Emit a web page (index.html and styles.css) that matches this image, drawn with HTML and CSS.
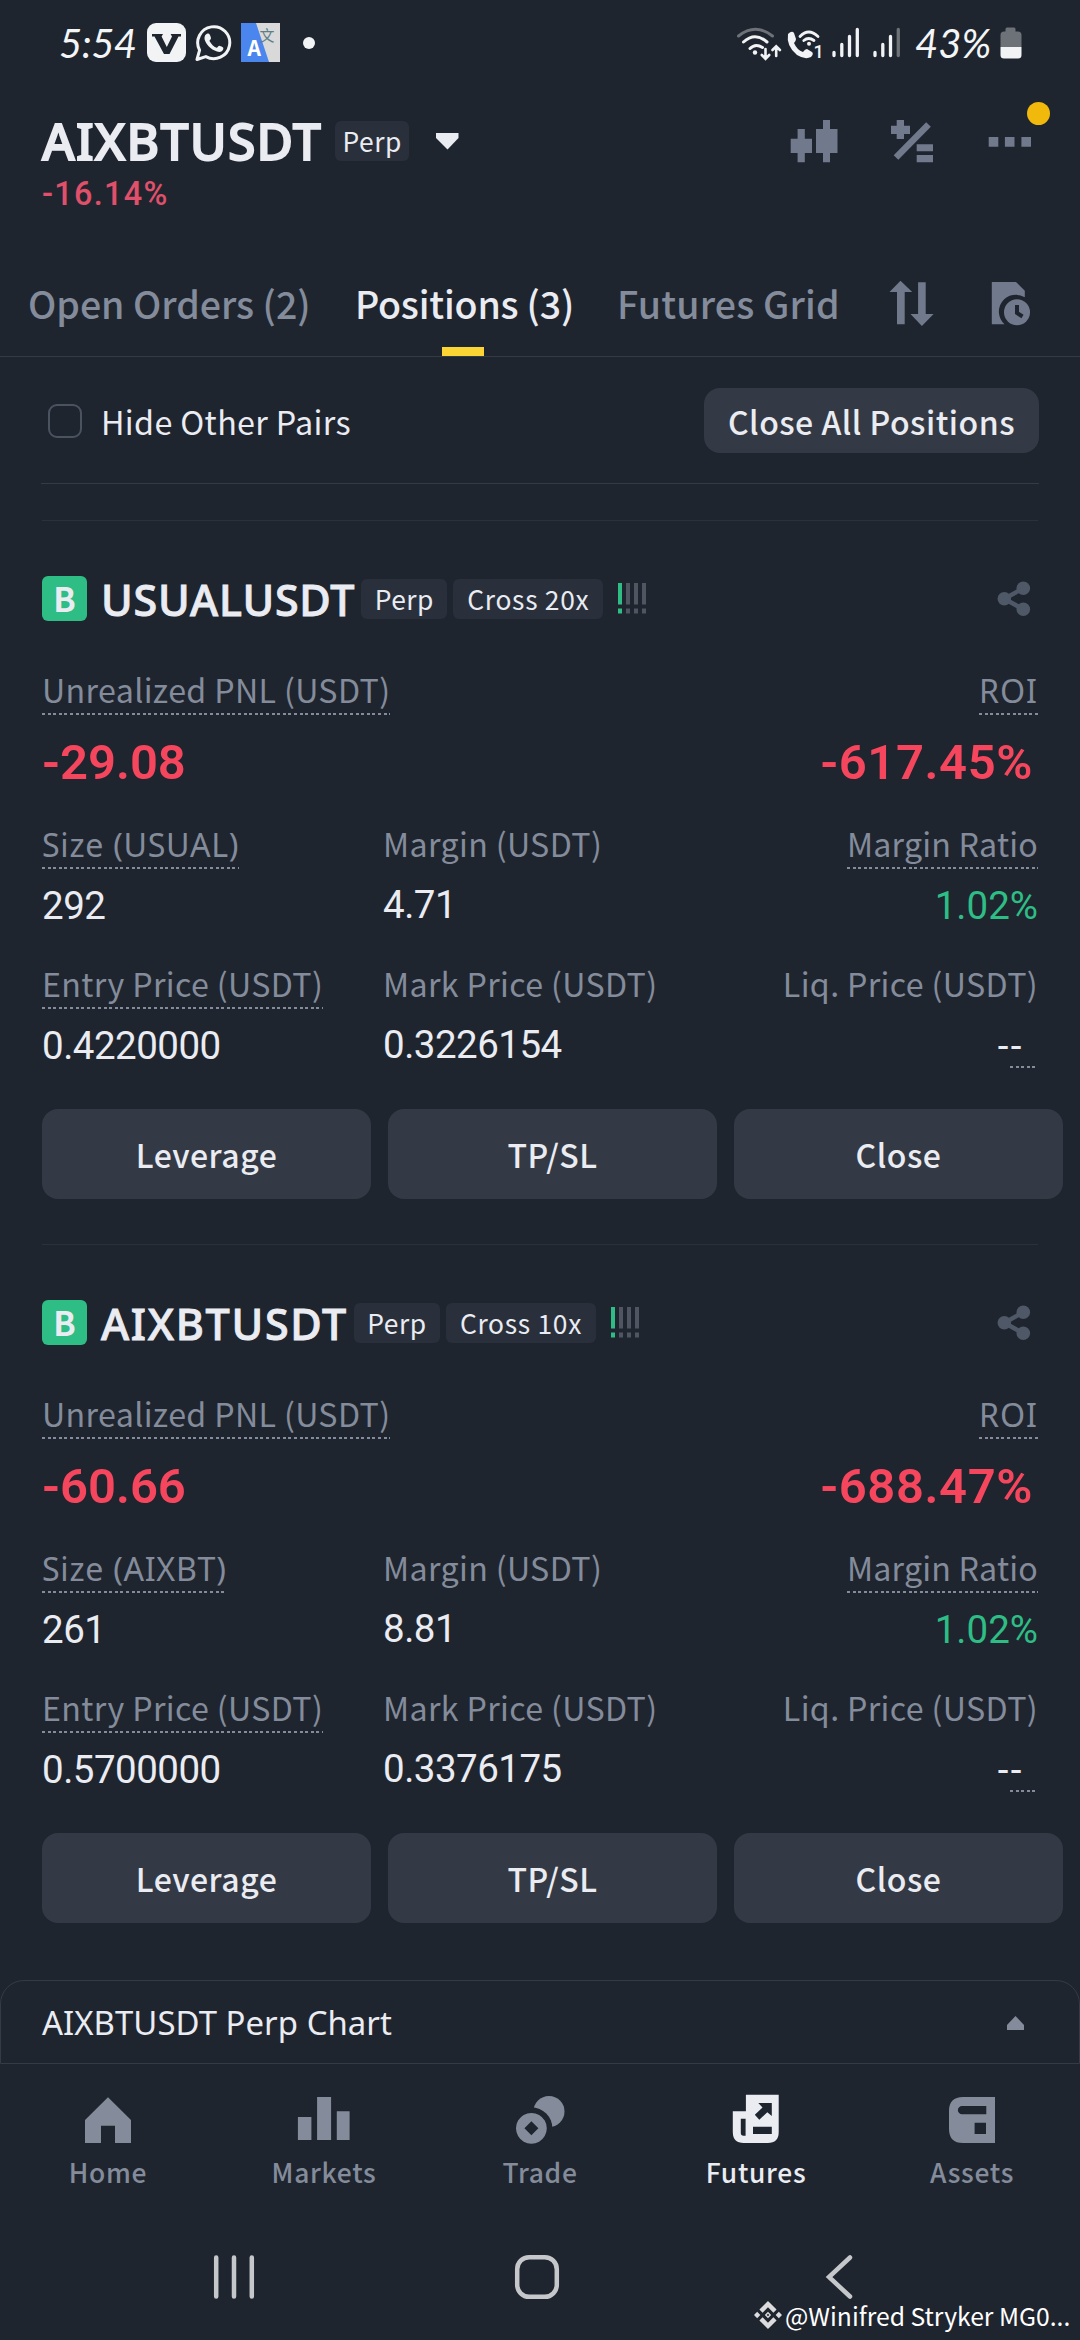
FILE: index.html
```html
<!DOCTYPE html>
<html lang="en">
<head>
<meta charset="utf-8">
<title>Futures positions</title>
<link rel="stylesheet" href="styles.css">
</head>
<body>
<div class="screen">

  <div class="status">
    <span class="status-time">5:54</span>
    <svg class="ic-v" width="39" height="39" viewBox="0 0 39 39"><rect width="39" height="39" rx="9" fill="#f1f3f4"/><path d="M5 11H16L14.6 13.5L19.8 24L25 13.5L23.6 11H34V13.5H31.5L22.5 31H17L7.5 13.5H5Z" fill="#1f252f"/></svg>
    <svg class="ic-wa" width="37" height="39" viewBox="0 0 37 39"><path d="M2 36.5L4.6 27.2A16 16 0 1 1 10.8 33.6Z" fill="none" stroke="#f1f3f4" stroke-width="3" stroke-linejoin="round"/><path d="M12.5 10.5C14.5 10 15 11.5 16 15C16 16.5 14.5 17 14.5 18C16.5 21.5 18.5 23.5 21.5 24.8C22.8 24.8 23 22.8 24.5 22.8C28 24 28.5 24.5 28.3 26C27.5 29 24.5 29.3 22 28.5C15.5 26.5 11 21.5 9.5 16C9.3 13 10.5 11 12.5 10.5Z" fill="#f1f3f4"/></svg>
    <svg class="ic-tr" width="39" height="39" viewBox="0 0 39 39"><rect width="39" height="39" fill="#d9d9d9"/><path d="M0 0H15L28 39H0Z" fill="#4a86ee"/><text x="6.5" y="33" class="tr-a">A</text><text x="18.5" y="18" class="tr-z">文</text></svg>
    <span class="status-dot"></span>
    <div class="status-right">
      <svg width="48" height="40" viewBox="0 0 48 40" fill="none" stroke="#f1f3f4" stroke-width="3" stroke-linecap="round"><path d="M3.5 13Q20.5 -.5 37.5 13" stroke="#6d7178"/><path d="M8.5 19Q20 8.500 32 19M15 25.500Q20.500 20 27.500 24.500"/><circle cx="20" cy="29.500" r="2.200" fill="#f1f3f4" stroke="none"/><path d="M30.500 26V35M26.800 32L30.500 35.800L34.200 32M41.200 33V24M37.500 27L41.200 23.300L44.900 27" stroke-width="2.600"/></svg>
      <svg class="ic-call" width="42" height="40" viewBox="0 0 42 40"><path d="M4 11Q8 7 10 10L12 16Q12 18 10 20Q13 27 19 29Q21 26 23 26L28 29Q30 31 27 34Q21 37 13 32Q2 23 4 11Z" fill="#f1f3f4"/><g fill="none" stroke="#f1f3f4" stroke-width="2.800" stroke-linecap="round"><path d="M16 13.500Q24.500 4.500 34 13.500M19.800 17.500Q24.500 13.500 30 17.500"/></g><circle cx="25" cy="20.700" r="2" fill="#f1f3f4"/><text x="29.500" y="35" class="call-n">1</text></svg>
      <svg class="ic-sig" width="29" height="32" viewBox="0 0 29 32" stroke="#f1f3f4" stroke-width="3.300" stroke-linecap="round"><path d="M2 25.500V28.500M9.800 17.500V28.500M17.500 9.500V28.500M25.300 2.500V28.500"/></svg>
      <svg class="ic-sig2" width="29" height="32" viewBox="0 0 29 32" stroke="#f1f3f4" stroke-width="3.300" stroke-linecap="round"><path d="M2 25.500V28.500M9.800 17.500V28.500M17.500 9.500V28.500"/><path d="M25.300 2.500V28.500" stroke="#6d7178"/></svg>
      <span class="status-pct">43%</span>
      <svg class="ic-bat" width="22" height="32" viewBox="0 0 22 32"><path d="M5.500 4.500V2Q5.500 .5 7 .5H14Q15.500 .5 15.500 2V4.500H18Q21.500 4.500 21.500 8V20H.5V8Q.5 4.500 4 4.500Z" fill="#6d7178"/><path d="M.5 20H21.500V28Q21.500 31.500 18 31.500H4Q.5 31.500 .5 28Z" fill="#f1f3f4"/></svg>
    </div>
  </div>

  <header class="head">
    <div class="head-row">
      <h1 class="symbol">AIXBTUSDT</h1>
      <span class="tag tag-head">Perp</span>
      <svg class="caret" width="23" height="17" viewBox="0 0 23 17"><path d="M0 0H22.500V5L11.500 16.500L0 5Z" fill="#eaecf2"/></svg>
      <div class="head-icons">
        <svg width="60" height="60" viewBox="0 0 60 60" fill="#717a8c"><path d="M13.600 18H20.800V27.700H28V42H20.800V51.300H13.600V42H6.700V27.700H13.600ZM39 9H46V18H53.500V42H46V51.300H39V42H32V18H39Z"/></svg>
        <svg width="60" height="60" viewBox="0 0 60 60" fill="#717a8c"><path d="M14.700 9H22V14.700H28V23H22V28H14.700V23H9V14.700H14.700ZM34.700 33.300H51V40.300H34.700ZM34.700 44H51V51.300H34.700Z"/><path d="M14 46.500L46.500 13.500" stroke="#717a8c" stroke-width="6.500"/></svg>
        <div class="more">
          <svg width="60" height="60" viewBox="0 0 60 60" fill="#717a8c"><path d="M8.700 26H18.300V35.700H8.700ZM24.900 26H34.500V35.700H24.900ZM41.400 26H51V35.700H41.400Z"/></svg>
          <span class="notice"></span>
        </div>
      </div>
    </div>
    <div class="change">-16.14%</div>
  </header>

  <nav class="tabs">
    <span class="tab">Open Orders (2)</span>
    <span class="tab tab-on">Positions (3)</span>
    <span class="tab tab-grid">Futures Grid</span>
    <svg width="60" height="60" viewBox="0 0 60 60" fill="#717a8c"><path d="M18.500 7.700L30.200 19H22.700V51.300H15V19H7.500ZM36.100 9.300H43.700V41H51.600L39.900 53L28.500 41H36.100Z"/></svg>
    <svg width="60" height="60" viewBox="0 0 60 60" fill="#717a8c"><path d="M11.800 9H36L44.800 17.700V24.200A17 17 0 0 0 24.500 51.300H11.800Z"/><circle cx="37" cy="39.300" r="13"/><path d="M37 32V40L42.500 43.500" fill="none" stroke="#1f252f" stroke-width="4"/></svg>
  </nav>

  <div class="filter">
    <span class="check"></span>
    <span class="filter-label">Hide Other Pairs</span>
    <button class="close-all">Close All Positions</button>
  </div>

  <main class="list">
    <article class="card">
      <div class="card-head">
        <span class="side">B</span>
        <h2 class="pair">USUALUSDT</h2>
        <span class="tag tag-perp">Perp</span>
        <span class="tag tag-cross">Cross 20x</span>
        <svg class="risk" width="28" height="31" viewBox="0 0 28 31"><path d="M0 0H4V21.500H0ZM0 25.500H4V30.500H0Z" fill="#2ebd85"/><path d="M8 0H12V21.500H8ZM8 25.500H12V30.500H8ZM16 0H20V21.500H16ZM16 25.500H20V30.500H16ZM24 0H28V21.500H24ZM24 25.500H28V30.500H24Z" fill="#4f5661"/></svg>
        <svg class="share" width="36" height="36" viewBox="0 0 36 36" fill="#4f5867"><path d="M27.300 7.300L8.300 17.700L27.300 28.300" fill="none" stroke="#4f5867" stroke-width="4.500"/><circle cx="8.300" cy="17.700" r="6.800"/><circle cx="27.300" cy="7.300" r="6.800"/><circle cx="27.300" cy="28.300" r="6.800"/></svg>
      </div>
      <div class="pnl">
        <div><span class="label dots">Unrealized PNL (USDT)</span><div class="big">-29.08</div></div>
        <div class="end"><span class="label dots roi">ROI</span><div class="big big-roi">-617.45%</div></div>
      </div>
      <div class="stats">
        <div><span class="label dots size">Size (USUAL)</span><div class="val">292</div></div>
        <div><span class="label">Margin (USDT)</span><div class="val mid">4.71</div></div>
        <div class="end"><span class="label dots ratio">Margin Ratio</span><div class="val up">1.02%</div></div>
        <div><span class="label dots">Entry Price (USDT)</span><div class="val">0.4220000</div></div>
        <div><span class="label">Mark Price (USDT)</span><div class="val mid">0.3226154</div></div>
        <div class="end"><span class="label">Liq. Price (USDT)</span><div class="val none">--</div></div>
      </div>
      <div class="actions"><button>Leverage</button><button>TP/SL</button><button>Close</button></div>
    </article>

    <article class="card">
      <div class="card-head">
        <span class="side">B</span>
        <h2 class="pair pair-wide">AIXBTUSDT</h2>
        <span class="tag tag-perp">Perp</span>
        <span class="tag tag-cross">Cross 10x</span>
        <svg class="risk" width="28" height="31" viewBox="0 0 28 31"><path d="M0 0H4V21.500H0ZM0 25.500H4V30.500H0Z" fill="#2ebd85"/><path d="M8 0H12V21.500H8ZM8 25.500H12V30.500H8ZM16 0H20V21.500H16ZM16 25.500H20V30.500H16ZM24 0H28V21.500H24ZM24 25.500H28V30.500H24Z" fill="#4f5661"/></svg>
        <svg class="share" width="36" height="36" viewBox="0 0 36 36" fill="#4f5867"><path d="M27.300 7.300L8.300 17.700L27.300 28.300" fill="none" stroke="#4f5867" stroke-width="4.500"/><circle cx="8.300" cy="17.700" r="6.800"/><circle cx="27.300" cy="7.300" r="6.800"/><circle cx="27.300" cy="28.300" r="6.800"/></svg>
      </div>
      <div class="pnl">
        <div><span class="label dots">Unrealized PNL (USDT)</span><div class="big">-60.66</div></div>
        <div class="end"><span class="label dots roi">ROI</span><div class="big big-roi">-688.47%</div></div>
      </div>
      <div class="stats">
        <div><span class="label dots size">Size (AIXBT)</span><div class="val">261</div></div>
        <div><span class="label">Margin (USDT)</span><div class="val mid">8.81</div></div>
        <div class="end"><span class="label dots ratio">Margin Ratio</span><div class="val up">1.02%</div></div>
        <div><span class="label dots">Entry Price (USDT)</span><div class="val">0.5700000</div></div>
        <div><span class="label">Mark Price (USDT)</span><div class="val mid">0.3376175</div></div>
        <div class="end"><span class="label">Liq. Price (USDT)</span><div class="val none">--</div></div>
      </div>
      <div class="actions"><button>Leverage</button><button>TP/SL</button><button>Close</button></div>
    </article>
  </main>

  <div class="chart-bar">
    <span>AIXBTUSDT Perp Chart</span>
    <svg width="17" height="14" viewBox="0 0 17 14"><path d="M8.500 0L17 9V14H0V9Z" fill="#848c9b"/></svg>
  </div>

  <nav class="bottom">
    <div class="item"><svg width="56" height="56" viewBox="0 0 56 56" fill="#848c9b"><path d="M28 5.300L51 28V51H35V33.700H21V51H5V28Z"/></svg><span>Home</span></div>
    <div class="item"><svg width="56" height="56" viewBox="0 0 56 56" fill="#848c9b"><path d="M1.900 25H15.400V48H1.900ZM21.100 5H35.100V48H21.100ZM40.800 19.300H53.600V48H40.800Z"/></svg><span>Markets</span></div>
    <div class="item"><svg width="56" height="56" viewBox="0 0 56 56" fill="#848c9b"><mask id="ring"><rect width="56" height="56" fill="#fff"/><circle cx="19.400" cy="36.300" r="21" fill="#000"/></mask><circle cx="37" cy="19.500" r="15.500" mask="url(#ring)"/><path fill-rule="evenodd" d="M19.400 20.900A15.400 15.400 0 1 1 19.390 20.900ZM19.400 29.300L12.400 36.300L19.400 43.300L26.400 36.300Z"/></svg><span>Trade</span></div>
    <div class="item item-on"><svg width="56" height="56" viewBox="0 0 56 56" fill="#eaecf2"><path fill-rule="evenodd" d="M17.900 2.700H50.700V40Q50.700 51 39.700 51H15.800Q4.800 51 4.800 40V19.300H17.900ZM12.800 26.700V41Q12.800 43.700 15.500 43.700H17.600V26.700ZM25 34.700V42H43.800V34.700ZM30.300 11H43.800V24L39.300 20.300L31.300 27.700L26.800 22.700L34.500 15.500Z"/></svg><span>Futures</span></div>
    <div class="item"><svg width="56" height="56" viewBox="0 0 56 56" fill="#848c9b"><path fill-rule="evenodd" d="M19 5H51V51H19Q5 51 5 37V19Q5 5 19 5ZM18 14A4.150 4.150 0 0 0 18 22.300H42.300V14ZM30.600 30.700V42H42V30.700Z"/></svg><span>Assets</span></div>
  </nav>

  <div class="sys">
    <svg width="56" height="56" viewBox="0 0 56 56" stroke="#c6c7cb" stroke-width="4.500" stroke-linecap="round"><path d="M10.200 8.500V47.500M28 8.500V47.500M45.800 8.500V47.500"/></svg>
    <svg width="56" height="56" viewBox="0 0 56 56" fill="none" stroke="#c6c7cb" stroke-width="4.500"><rect x="8.200" y="8.200" width="39.600" height="39.600" rx="12"/></svg>
    <svg width="56" height="56" viewBox="0 0 56 56" fill="none" stroke="#c6c7cb" stroke-width="4.500" stroke-linecap="round"><path d="M39 8.500L18 28L39 47.500"/></svg>
  </div>

  <div class="credit">
    <svg width="28" height="28" viewBox="0 0 24 24" fill="#dcdcdc"><path d="M16.624 13.920l2.718 2.716-7.353 7.353-7.353-7.352 2.717-2.717 4.636 4.660 4.635-4.660zm4.637-4.636L24 12l-2.715 2.716L18.568 12l2.693-2.716zm-9.272 0l2.716 2.692-2.717 2.717L9.272 12l2.716-2.715zm-9.273 0L5.409 12l-2.692 2.692L0 12l2.716-2.716zM11.989.011l7.353 7.329-2.718 2.716-4.635-4.636-4.636 4.660-2.717-2.716z"/><path d="M12 10.900L13.100 12L12 13.100L10.900 12Z" fill="#1f252f"/></svg>
    <span>@Winifred Stryker MG0...</span>
  </div>
</div>
</body>
</html>
```
FILE: styles.css
```css
* { box-sizing: border-box; margin: 0; padding: 0; }

body {
  background: #1f252f;
  color: #eaecf2;
  font-family: "Noto Sans CJK SC", "Noto Sans", sans-serif;
}

svg { display: block; flex: none; }

.screen {
  position: relative;
  width: 1080px;
  height: 2340px;
  overflow: hidden;
  background: #1f252f;
}

/* status bar */
.status {
  display: flex;
  align-items: center;
  height: 85px;
  padding: 0 58px 0 59px;
}
.status-time, .status-pct {
  font: italic 400 40px/44px Lato, sans-serif;
  color: #f4f5f6;
  white-space: nowrap;
}
.status-time { width: 88px; letter-spacing: -.5px; }
.status-pct { width: 85px; margin-left: 13px; letter-spacing: 0; }
.ic-wa { margin-left: 9px; }
.ic-tr { margin-left: 9px; }
.tr-a { font: 700 21px "Noto Sans CJK SC", sans-serif; fill: #fff; }
.tr-z { font: 400 15px "Noto Sans CJK SC", sans-serif; fill: #5f7f88; }
.status-dot {
  width: 12px;
  height: 12px;
  margin-left: 23px;
  border-radius: 50%;
  background: #f1f3f4;
}
.status-right { display: flex; align-items: center; margin-left: auto; }
.ic-call { margin-left: 1px; }
.call-n { font: 500 18px Roboto, sans-serif; fill: #f1f3f4; }
.ic-sig { margin-left: 6px; }
.ic-sig2 { margin-left: 12px; }

/* instrument header */
.head { padding: 26px 40px 0 42px; }
.head-row { display: flex; align-items: center; height: 60px; }
.symbol {
  font: 500 50px/60px "Noto Sans", sans-serif;
  letter-spacing: 1.2px;
  -webkit-text-stroke: 1.8px #eaecf2;
}
.tag {
  display: flex;
  align-items: center;
  justify-content: center;
  height: 40px;
  border-radius: 6px;
  background: #29303c;
  font-size: 26.4px;
  letter-spacing: .5px;
  line-height: 40px;
  white-space: nowrap;
}
.tag-head { width: 74px; margin-left: 13px; }
.caret { margin-left: 27px; }
.head-icons { display: flex; gap: 38px; margin-left: auto; }
.more { position: relative; }
.notice {
  position: absolute;
  left: 47px;
  top: -9px;
  width: 23px;
  height: 23px;
  border-radius: 50%;
  background: #f0b90b;
}
.change {
  margin-top: 5px;
  font: 500 32.4px/36px Roboto, sans-serif;
  letter-spacing: 1.3px;
  color: #e0506a;
}

/* tabs */
.tabs {
  display: grid;
  grid-template-columns: 327px 262px 265px 60px 60px;
  column-gap: 0;
  align-items: center;
  height: 107px;
  margin-top: 38px;
  padding-left: 28px;
  border-bottom: 1px solid #343b46;
}
.tabs svg + svg { margin-left: 38px; }
.tab {
  position: relative;
  font-size: 37.5px;
  font-weight: 500;
  line-height: 106px;
  color: #848c9b;
  white-space: nowrap;
}
.tab-on { color: #eaecf2; letter-spacing: -.2px; }
.tab-grid { letter-spacing: .2px; }
.tab-on::after {
  content: "";
  position: absolute;
  left: 87px;
  bottom: 0;
  width: 42px;
  height: 9px;
  background: #fcd535;
}

/* filter row */
.filter {
  display: flex;
  align-items: center;
  height: 127px;
  margin: 0 41px;
  padding-top: 1px;
  border-bottom: 1px solid #343b46;
}
.check {
  width: 34px;
  height: 34px;
  margin-left: 7px;
  border: 2.5px solid #4b5260;
  border-radius: 9px;
}
.filter-label { margin-left: 19px; font-size: 32.3px; letter-spacing: .35px; }
button {
  border: 0;
  border-radius: 16px;
  background: #343a45;
  color: #eaecf2;
  font: 500 32px/46px "Noto Sans CJK SC", sans-serif;
  letter-spacing: .5px;
}
.close-all { width: 335px; height: 65px; margin-left: auto; }

/* position cards */
.list { padding-top: 36px; }
.card { height: 724px; padding: 0 17px 0 42px; }
.card::before {
  content: "";
  display: block;
  height: 1px;
  margin-right: 25px;
  background: #2a313c;
}
.card-head {
  display: flex;
  align-items: center;
  height: 55px;
  margin: 50px 25px 0 0;
}
.side {
  width: 45px;
  height: 45px;
  border-radius: 6px;
  background: #2ebd85;
  font: 700 33px/45px "Noto Sans CJK SC", sans-serif;
  text-align: center;
}
.pair {
  margin-left: 14px;
  padding-top: 2px;
  font: 500 43px/55px "Noto Sans", sans-serif;
  letter-spacing: .8px;
  -webkit-text-stroke: .9px #eaecf2;
}
.pair-wide { letter-spacing: 1.7px; }
.tag-perp { width: 86px; margin-left: 6px; }
.tag-cross { width: 150px; margin-left: 6px; letter-spacing: .7px; }
.risk { margin-left: 15px; }
.share { margin: 0 6px 0 auto; }

.label {
  display: inline-block;
  height: 49px;
  font-size: 32.2px;
  line-height: 47px;
  letter-spacing: .35px;
  color: #848c9b;
  white-space: nowrap;
  vertical-align: top;
}
.dots {
  background: repeating-linear-gradient(90deg, #848c9b 0 3px, transparent 3px 5.6px) 0 100% / 100% 2px no-repeat;
}
.roi, .size { font-family: "Noto Sans", sans-serif; line-height: 50px; }
.roi { letter-spacing: 1px; }
.size { letter-spacing: .7px; }
.ratio { letter-spacing: .2px; }
.end { text-align: right; }

.pnl {
  display: flex;
  justify-content: space-between;
  margin: 40px 25px 0 0;
}
.big {
  margin-top: 18px;
  font: 600 49px/60px Roboto, sans-serif;
  letter-spacing: 0;
  color: #f6465d;
}
.big-roi { padding-right: 5px; letter-spacing: .6px; }
.stats {
  display: grid;
  grid-template-columns: 341px 1fr auto;
  row-gap: 32px;
  margin: 27px 25px 0 0;
}
.val {
  margin-top: 15px;
  font: 400 38.5px/44px Roboto, sans-serif;
  letter-spacing: -.5px;
}
.mid { margin-top: 14px; }
.up { color: #2ebd85; letter-spacing: 0; }
.none {
  padding-right: 14px;
  letter-spacing: 2.5px;
  background: repeating-linear-gradient(90deg, #848c9b 0 3px, transparent 3px 5.6px) calc(100% - 2px) 100% / 26px 2px no-repeat;
}
.actions {
  display: grid;
  grid-template-columns: repeat(3, 1fr);
  gap: 17px;
  margin-top: 41px;
}
.actions button { height: 90px; }

/* collapsed chart */
.chart-bar {
  display: flex;
  align-items: center;
  justify-content: space-between;
  height: 84px;
  margin-top: 12px;
  padding: 1px 55px 0 41px;
  border: 1px solid #343b46;
  border-radius: 24px 24px 0 0;
  font: 400 32.9px/46px "Noto Sans", sans-serif;
  letter-spacing: .05px;
}

/* app navigation */
.bottom {
  display: grid;
  grid-template-columns: repeat(5, 1fr);
  height: 146px;
  padding-top: 28px;
  color: #848c9b;
}
.item { display: flex; flex-direction: column; align-items: center; }
.item span {
  margin-top: 8px;
  font-size: 26.4px;
  font-weight: 500;
  line-height: 32px;
  letter-spacing: .7px;
}
.item-on { color: #eaecf2; }

/* system navigation */
.sys {
  display: flex;
  justify-content: space-between;
  margin-top: 39px;
  padding: 0 213px 0 206px;
}

.credit {
  position: absolute;
  left: 754px;
  top: 2297px;
  display: flex;
  align-items: center;
  gap: 3px;
  height: 36px;
  color: #fff;
  font-size: 24.7px;
  line-height: 36px;
  white-space: nowrap;
}
```
